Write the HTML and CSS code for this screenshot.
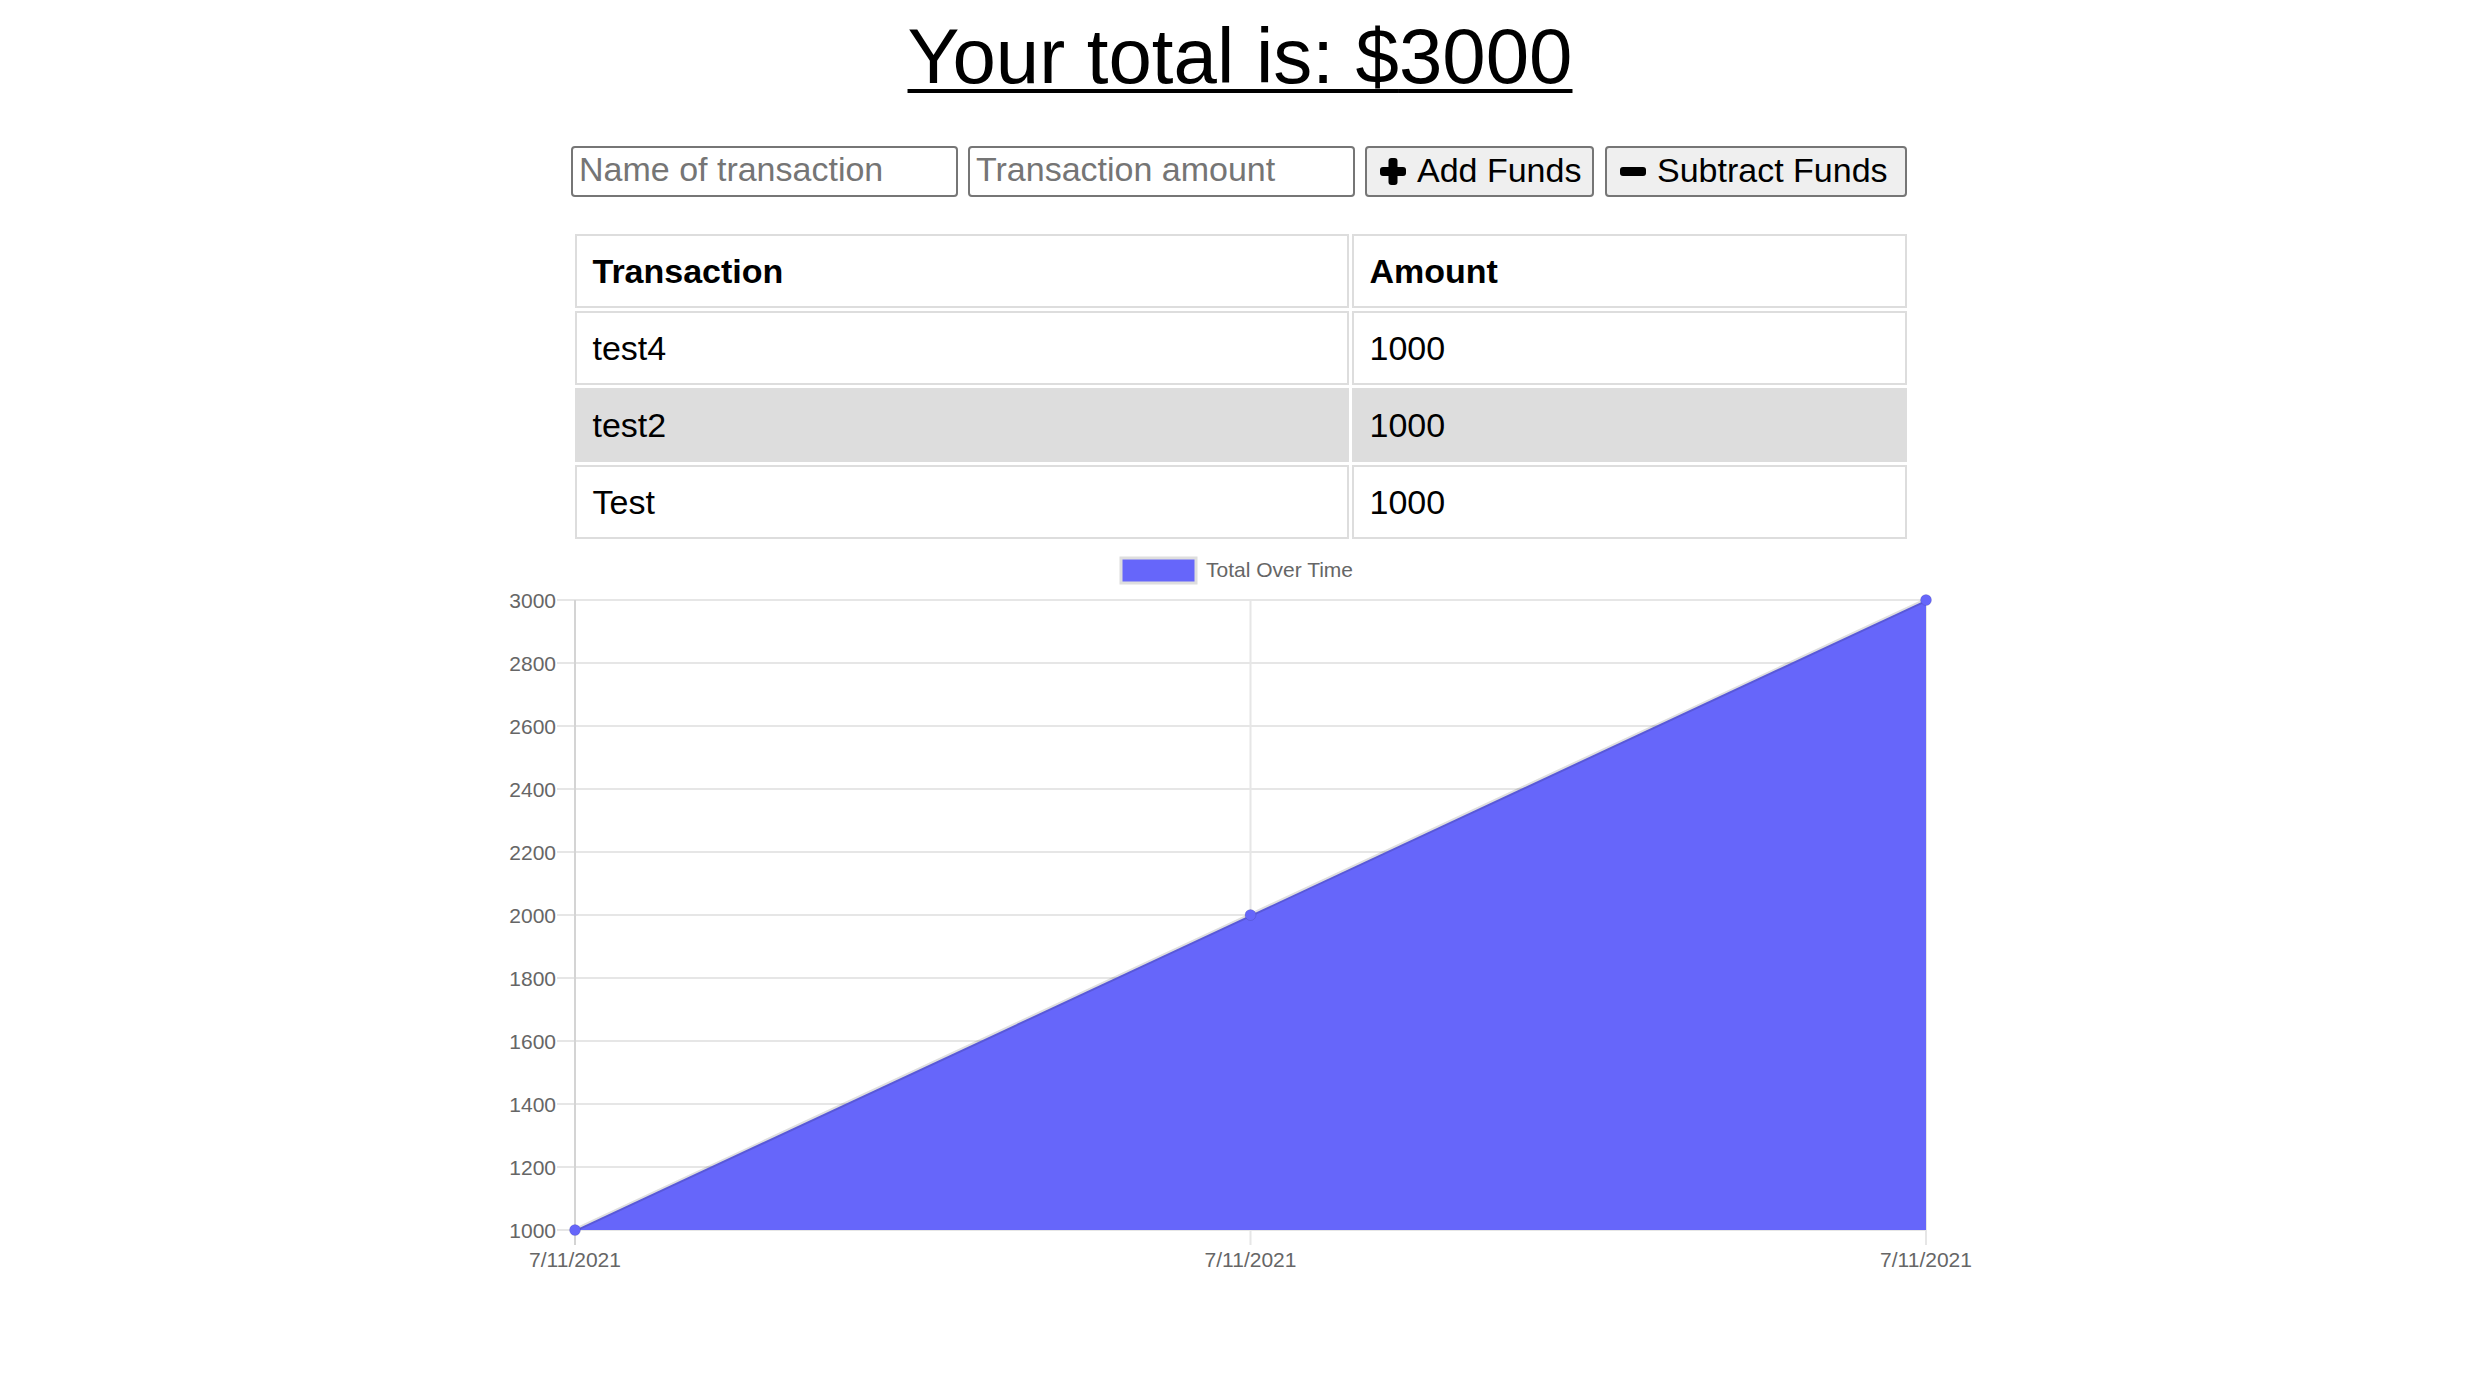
FILE: index.html
```html
<!DOCTYPE html>
<html lang="en">
<head>
<meta charset="utf-8">
<title>Budget Tracker</title>
<link rel="stylesheet" href="styles.css">
</head>
<body>
<div class="page">
  <h1 class="total">Your total is: $<span id="total">3000</span></h1>

  <div class="form">
    <input class="field" type="text" placeholder="Name of transaction">
    <input class="field" type="number" placeholder="Transaction amount">
    <button class="btn btn-add" type="button">
      <svg class="icon" width="26" height="27" viewBox="0 0 26 27"><rect x="8.5" y="0" width="9" height="27" rx="3"/><rect x="0" y="9" width="26" height="9" rx="3"/></svg>
      <span>Add Funds</span>
    </button>
    <button class="btn btn-sub" type="button">
      <svg class="icon" width="26" height="27" viewBox="0 0 26 27"><rect x="0" y="9" width="26" height="9" rx="3"/></svg>
      <span>Subtract Funds</span>
    </button>
  </div>

  <table class="tx">
    <thead>
      <tr><th class="c1">Transaction</th><th class="c2">Amount</th></tr>
    </thead>
    <tbody>
      <tr><td>test4</td><td>1000</td></tr>
      <tr class="shade"><td>test2</td><td>1000</td></tr>
      <tr><td>Test</td><td>1000</td></tr>
    </tbody>
  </table>

  <svg class="chart" width="1564" height="760" viewBox="460 542 1564 760">
    <!-- legend -->
    <rect x="1121" y="558" width="75" height="25" class="legend-box"/>
    <text x="1206" y="577" class="lbl">Total Over Time</text>

    <!-- horizontal grid -->
    <g class="grid">
      <line x1="557" y1="600" x2="1926" y2="600"/>
      <line x1="557" y1="663" x2="1926" y2="663"/>
      <line x1="557" y1="726" x2="1926" y2="726"/>
      <line x1="557" y1="789" x2="1926" y2="789"/>
      <line x1="557" y1="852" x2="1926" y2="852"/>
      <line x1="557" y1="915" x2="1926" y2="915"/>
      <line x1="557" y1="978" x2="1926" y2="978"/>
      <line x1="557" y1="1041" x2="1926" y2="1041"/>
      <line x1="557" y1="1104" x2="1926" y2="1104"/>
      <line x1="557" y1="1167" x2="1926" y2="1167"/>
      <line x1="557" y1="1230" x2="1926" y2="1230"/>
      <line x1="1250.5" y1="600" x2="1250.5" y2="1245"/>
      <line x1="1926" y1="600" x2="1926" y2="1245"/>
    </g>
    <line class="axis" x1="575" y1="600" x2="575" y2="1245"/>

    <!-- y labels -->
    <g class="lbl ylbl">
      <text x="556" y="607.5">3000</text>
      <text x="556" y="670.5">2800</text>
      <text x="556" y="733.5">2600</text>
      <text x="556" y="796.5">2400</text>
      <text x="556" y="859.5">2200</text>
      <text x="556" y="922.5">2000</text>
      <text x="556" y="985.5">1800</text>
      <text x="556" y="1048.5">1600</text>
      <text x="556" y="1111.5">1400</text>
      <text x="556" y="1174.5">1200</text>
      <text x="556" y="1237.5">1000</text>
    </g>

    <!-- x labels -->
    <g class="lbl xlbl">
      <text x="575" y="1267">7/11/2021</text>
      <text x="1250.5" y="1267">7/11/2021</text>
      <text x="1926" y="1267">7/11/2021</text>
    </g>

    <!-- data -->
    <polygon class="area" points="575,1230 1250.5,915 1926,600 1926,1230"/>
    <polyline class="line" points="575,1230 1250.5,915 1926,600"/>
    <circle class="pt" cx="575" cy="1230" r="5.5"/>
    <circle class="pt" cx="1250.5" cy="915" r="5.5"/>
    <circle class="pt" cx="1926" cy="600" r="5.5"/>
  </svg>
</div>
</body>
</html>
```

FILE: styles.css
```css
html, body {
  margin: 0;
  padding: 0;
  background: #ffffff;
}

body {
  font-family: "Liberation Sans", Arial, Helvetica, sans-serif;
  color: #000000;
}

.page {
  display: flex;
  flex-direction: column;
  align-items: center;
}

.total {
  margin: 12px 4px 0 0;
  font-size: 78px;
  line-height: 88px;
  font-weight: normal;
  text-decoration: underline;
  text-decoration-thickness: 4px;
  text-underline-offset: 6px;
}

.form {
  margin-top: 46px;
  margin-right: 6px;
  display: flex;
  align-items: stretch;
  gap: 11px;
}

.field {
  box-sizing: border-box;
  width: 387px;
  height: 51px;
  margin-right: -1px;
  padding: 1px 6px 5px;
  border: 2px solid #767676;
  border-radius: 4px;
  font-family: "Liberation Sans", Arial, sans-serif;
  font-size: 34px;
  line-height: 39px;
  color: #000000;
  background: #ffffff;
}

.field::placeholder {
  color: #757575;
}

.field::-webkit-outer-spin-button,
.field::-webkit-inner-spin-button {
  -webkit-appearance: none;
  margin: 0;
}

.btn {
  box-sizing: border-box;
  height: 51px;
  display: flex;
  align-items: center;
  gap: 11px;
  padding: 0 0 2px 13px;
  border: 2px solid #767676;
  border-radius: 4px;
  background: #efefef;
  font-family: "Liberation Sans", Arial, sans-serif;
  font-size: 34px;
  line-height: 39px;
  color: #000000;
  white-space: nowrap;
}

.btn-add {
  width: 229px;
}

.btn-sub {
  width: 302px;
}

.icon {
  flex: none;
  fill: #000000;
  margin-top: 2px;
}

.tx {
  margin-top: 34px;
  margin-right: 3px;
  border-collapse: separate;
  border-spacing: 3px;
  font-size: 34px;
  line-height: 39px;
}

.tx th,
.tx td {
  box-sizing: border-box;
  height: 74px;
  padding: 16px 16px 15px;
  border: 2px solid #dddddd;
  text-align: left;
  vertical-align: middle;
}

.tx th {
  font-weight: bold;
}

.tx .c1 {
  width: 774px;
}

.tx .c2 {
  width: 555px;
}

.tx .shade td {
  background: #dddddd;
}

.chart {
  display: block;
  flex: none;
}

.chart .lbl {
  font-family: "Liberation Sans", Arial, Helvetica, sans-serif;
  font-size: 21px;
  fill: #666666;
}

.chart .ylbl text {
  text-anchor: end;
}

.chart .xlbl text {
  text-anchor: middle;
}

.chart .grid line {
  stroke: #e6e6e6;
  stroke-width: 2;
}

.chart .axis {
  stroke: #d4d4d4;
  stroke-width: 2;
}

.chart .legend-box {
  fill: #6666fa;
  stroke: #dedede;
  stroke-width: 3;
}

.chart .area {
  fill: #6666fa;
}

.chart .line {
  fill: none;
  stroke: rgba(0, 0, 0, 0.13);
  stroke-width: 4;
  stroke-linejoin: round;
}

.chart .pt {
  fill: #6666fa;
  stroke: rgba(0, 0, 0, 0.1);
  stroke-width: 1;
}
```
